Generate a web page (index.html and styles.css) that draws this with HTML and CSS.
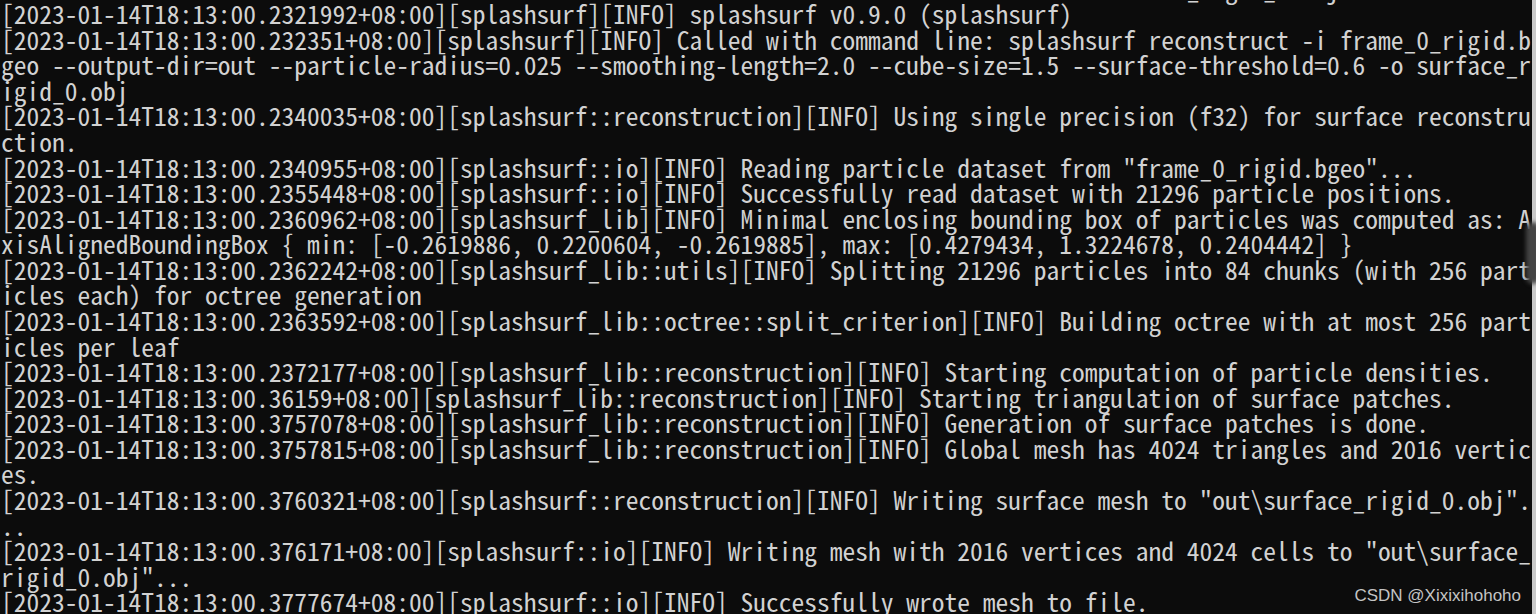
FILE: index.html
```html
<!DOCTYPE html>
<html lang="en">
<head>
<meta charset="utf-8">
<title>splashsurf console</title>
<link rel="stylesheet" href="styles.css">
</head>
<body>
<div class="console">
<pre class="log">                                                                                      surface_rigid_0.obj
[2023-01-14T18:13:00.2321992+08:00][splashsurf][INFO] splashsurf v0.9.0 (splashsurf)
[2023-01-14T18:13:00.232351+08:00][splashsurf][INFO] Called with command line: splashsurf reconstruct -i frame_0_rigid.b
geo --output-dir=out --particle-radius=0.025 --smoothing-length=2.0 --cube-size=1.5 --surface-threshold=0.6 -o surface_r
igid_0.obj
[2023-01-14T18:13:00.2340035+08:00][splashsurf::reconstruction][INFO] Using single precision (f32) for surface reconstru
ction.
[2023-01-14T18:13:00.2340955+08:00][splashsurf::io][INFO] Reading particle dataset from "frame_0_rigid.bgeo"...
[2023-01-14T18:13:00.2355448+08:00][splashsurf::io][INFO] Successfully read dataset with 21296 particle positions.
[2023-01-14T18:13:00.2360962+08:00][splashsurf_lib][INFO] Minimal enclosing bounding box of particles was computed as: A
xisAlignedBoundingBox { min: [-0.2619886, 0.2200604, -0.2619885], max: [0.4279434, 1.3224678, 0.2404442] }
[2023-01-14T18:13:00.2362242+08:00][splashsurf_lib::utils][INFO] Splitting 21296 particles into 84 chunks (with 256 part
icles each) for octree generation
[2023-01-14T18:13:00.2363592+08:00][splashsurf_lib::octree::split_criterion][INFO] Building octree with at most 256 part
icles per leaf
[2023-01-14T18:13:00.2372177+08:00][splashsurf_lib::reconstruction][INFO] Starting computation of particle densities.
[2023-01-14T18:13:00.36159+08:00][splashsurf_lib::reconstruction][INFO] Starting triangulation of surface patches.
[2023-01-14T18:13:00.3757078+08:00][splashsurf_lib::reconstruction][INFO] Generation of surface patches is done.
[2023-01-14T18:13:00.3757815+08:00][splashsurf_lib::reconstruction][INFO] Global mesh has 4024 triangles and 2016 vertic
es.
[2023-01-14T18:13:00.3760321+08:00][splashsurf::reconstruction][INFO] Writing surface mesh to "out\surface_rigid_0.obj".
..
[2023-01-14T18:13:00.376171+08:00][splashsurf::io][INFO] Writing mesh with 2016 vertices and 4024 cells to "out\surface_
rigid_0.obj"...
[2023-01-14T18:13:00.3777674+08:00][splashsurf::io][INFO] Successfully wrote mesh to file.</pre>
<div class="edge"></div>
<div class="thumb"></div>
<div class="watermark">CSDN @Xixixihohoho</div>
</div>
</body>
</html>
```

FILE: styles.css
```css
html, body {
  margin: 0;
  padding: 0;
  background: #0c0c0c;
}

.console {
  position: relative;
  width: 1536px;
  height: 614px;
  overflow: hidden;
  background: #0c0c0c;
}

.log {
  margin: -25.5px 0 0 0;
  padding: 0 0 0 1px;
  font-family: "Noto Sans Mono CJK SC", "Liberation Mono", monospace;
  font-size: 25.5px;
  line-height: 25.58px;
  color: #d2d2d2;
  white-space: pre;
}

.edge {
  position: absolute;
  top: 0;
  right: 0;
  width: 4px;
  height: 614px;
  background: #c9c9c9;
}

.thumb {
  position: absolute;
  top: 222px;
  right: -4px;
  width: 14px;
  height: 62px;
  border-radius: 8px;
  background: #444444;
  filter: blur(2px);
}

.watermark {
  position: absolute;
  right: 15px;
  bottom: 8px;
  font-family: "Liberation Sans", "Noto Sans", sans-serif;
  font-size: 17px;
  line-height: 20px;
  color: #c4c4c4;
}
```
